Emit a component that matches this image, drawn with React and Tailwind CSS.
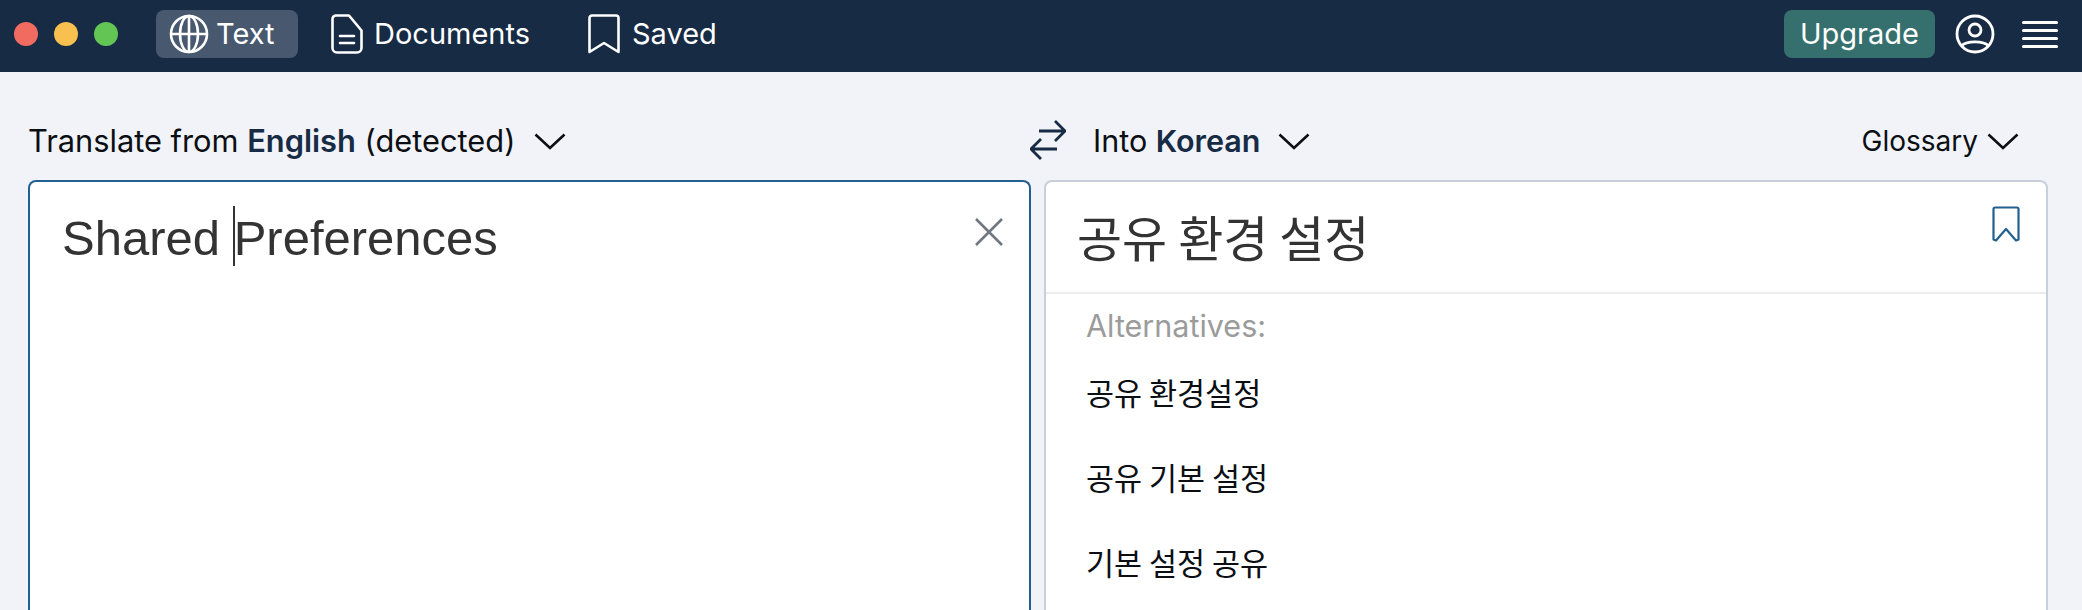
const ui = { fontFamily: 'Inter, sans-serif' }

function Chevron({ className }) {
  return (
    <svg viewBox="0 0 32 17" fill="none" stroke="currentColor" strokeWidth="2.6" className={className}>
      <path d="M1.5 1.5 16 15 30.5 1.5" />
    </svg>
  )
}

function Globe() {
  return (
    <svg viewBox="0 0 40 40" fill="none" stroke="white" strokeWidth="2.6" className="w-[40px] h-[40px] shrink-0">
      <circle cx="20" cy="20" r="18" />
      <ellipse cx="20" cy="20" rx="9" ry="18" />
      <path d="M2 20h36M20 2v36" />
    </svg>
  )
}

function DocIcon() {
  return (
    <svg viewBox="0 0 32 40" fill="none" stroke="white" strokeWidth="2.6" strokeLinejoin="round" strokeLinecap="round" className="w-[32px] h-[40px] shrink-0">
      <path d="M5 1.5h13l12.500 15V34a4.500 4.500 0 0 1-4.500 4.500H6A4.500 4.500 0 0 1 1.500 34V5A3.500 3.500 0 0 1 5 1.500Z" />
      <path d="M9 22h14M9 29h14" />
    </svg>
  )
}

function SavedIcon() {
  return (
    <svg viewBox="0 0 32 40" fill="none" stroke="white" strokeWidth="2.6" strokeLinejoin="round" className="w-[32px] h-[40px] shrink-0">
      <path d="M4 1.500h24a2.500 2.500 0 0 1 2.500 2.500v34L16 29 1.500 38V4A2.500 2.500 0 0 1 4 1.500Z" />
    </svg>
  )
}

function NavItem({ icon, label, active, className }) {
  return (
    <div className={`flex items-center h-[48px] rounded-lg text-[29px] text-white ${active ? 'bg-[#47586f] px-[13px]' : ''} ${className || ''}`}>
      {icon}
      <span>{label}</span>
    </div>
  )
}

export default function App() {
  return (
    <div className="h-[610px] overflow-hidden bg-[#f1f3f8] flex flex-col" style={ui}>
      <header className="h-[72px] shrink-0 bg-[#172b45] flex items-center pb-[4px]">
        <div className="flex items-center gap-[16px] pl-[14px]">
          <div className="w-[24px] h-[24px] rounded-full bg-[#f26b60]" />
          <div className="w-[24px] h-[24px] rounded-full bg-[#f7c04f]" />
          <div className="w-[24px] h-[24px] rounded-full bg-[#62c554]" />
        </div>
        <NavItem active icon={<Globe />} label="Text" className="ml-[38px] w-[142px] gap-[7px]" />
        <NavItem icon={<DocIcon />} label="Documents" className="ml-[33px] gap-[11px]" />
        <NavItem icon={<SavedIcon />} label="Saved" className="ml-[58px] gap-[12px]" />

        <div className="ml-auto flex items-center pr-[24px]">
          <button className="w-[151px] h-[48px] rounded-lg bg-[#35706f] text-white text-[29px]">Upgrade</button>
          <svg viewBox="0 0 40 40" fill="none" stroke="white" strokeWidth="2.8" className="w-[40px] h-[40px] ml-[20px]">
            <circle cx="20" cy="20" r="18" />
            <circle cx="20" cy="16" r="6" />
            <path d="M6.500 32C11 26.500 29 26.500 33.500 32" />
          </svg>
          <div className="ml-[27px] w-[36px] flex flex-col gap-[5px]">
            <div className="h-[3px] rounded-full bg-white" />
            <div className="h-[3px] rounded-full bg-white" />
            <div className="h-[3px] rounded-full bg-white" />
            <div className="h-[3px] rounded-full bg-white" />
          </div>
        </div>
      </header>

      <main className="flex-1 min-h-0 flex gap-[13px] pl-[28px] pr-[34px]">
        <section className="w-[1003px] flex flex-col">
          <div className="h-[108px] flex items-end pb-[15px] text-[30.8px] text-[#0b0f14]">
            <div className="flex items-center h-[48px]">
              <span>Translate from <b className="font-semibold text-[#172b45]">English</b> (detected)</span>
              <Chevron className="w-[32px] h-[17px] ml-[19px]" />
            </div>
          </div>
          <div className="relative flex-1 bg-white border-2 border-b-0 border-[#22608f] rounded-t-lg pl-[32px] pt-[26px]">
            <div className="text-[49px] leading-[60px] text-[#333]" style={{ fontFamily: '"Liberation Sans", sans-serif' }}>
              Shared <span className="inline-block w-[2px] h-[60px] -mx-px -mt-[2px] align-top bg-[#333]" />Preferences
            </div>
            <svg viewBox="0 0 28 28" fill="none" stroke="#6f7880" strokeWidth="2.6" className="absolute top-[36px] right-[26px] w-[28px] h-[28px]">
              <path d="M1 1l26 26M27 1 1 27" />
            </svg>
          </div>
        </section>

        <section className="flex-1 relative flex flex-col">
          <svg viewBox="0 0 36 40" fill="none" stroke="#172b45" strokeWidth="2.8" className="absolute top-[48px] -left-[14px] w-[36px] h-[40px]">
            <path d="M9 11h25M25 1l10 10-10 10M27 29H2M11 19 1 29l10 10" />
          </svg>
          <div className="h-[108px] flex items-end justify-between pb-[15px] pl-[49px] pr-[28px] text-[30.5px] text-[#0b0f14]">
            <div className="flex items-center h-[48px]">
              <span>Into <b className="font-semibold text-[#172b45]">Korean</b></span>
              <Chevron className="w-[32px] h-[17px] ml-[17px]" />
            </div>
            <div className="flex items-center h-[48px] text-[28px]">
              <span>Glossary</span>
              <Chevron className="w-[34px] h-[17px] ml-[8px]" />
            </div>
          </div>
          <div className="relative flex-1 bg-white border-2 border-b-0 border-[#c8cfda] rounded-t-lg">
            <div className="h-[112px] border-b-2 border-[#ececef] pl-[31px] pt-[19px] text-[49px] leading-[70px] text-[#333]" style={{ fontFamily: '"Noto Sans CJK KR", sans-serif' }}>
              공유 환경 설정
            </div>
            <svg viewBox="0 0 28 36" fill="none" stroke="#22608f" strokeWidth="2.2" strokeLinejoin="round" className="absolute top-[24px] right-[26px] w-[28px] h-[36px]">
              <path d="M3 1.500h22A1.500 1.500 0 0 1 26.500 3v30.500L24 34.500 14 23 4 34.500 1.500 33.500V3A1.500 1.500 0 0 1 3 1.500Z" />
            </svg>
            <div className="pl-[40px] pt-[14px]">
              <div className="text-[30.5px] leading-[36px] text-[#9b9b9b]">Alternatives:</div>
              <div className="flex flex-col text-[30.5px] text-[#0b0f14]" style={{ fontFamily: '"Noto Sans CJK KR", sans-serif' }}>
                <div className="h-[85px] flex items-center mt-[6px]">공유 환경설정</div>
                <div className="h-[85px] flex items-center">공유 기본 설정</div>
                <div className="h-[85px] flex items-center">기본 설정 공유</div>
              </div>
            </div>
          </div>
        </section>
      </main>
    </div>
  )
}
